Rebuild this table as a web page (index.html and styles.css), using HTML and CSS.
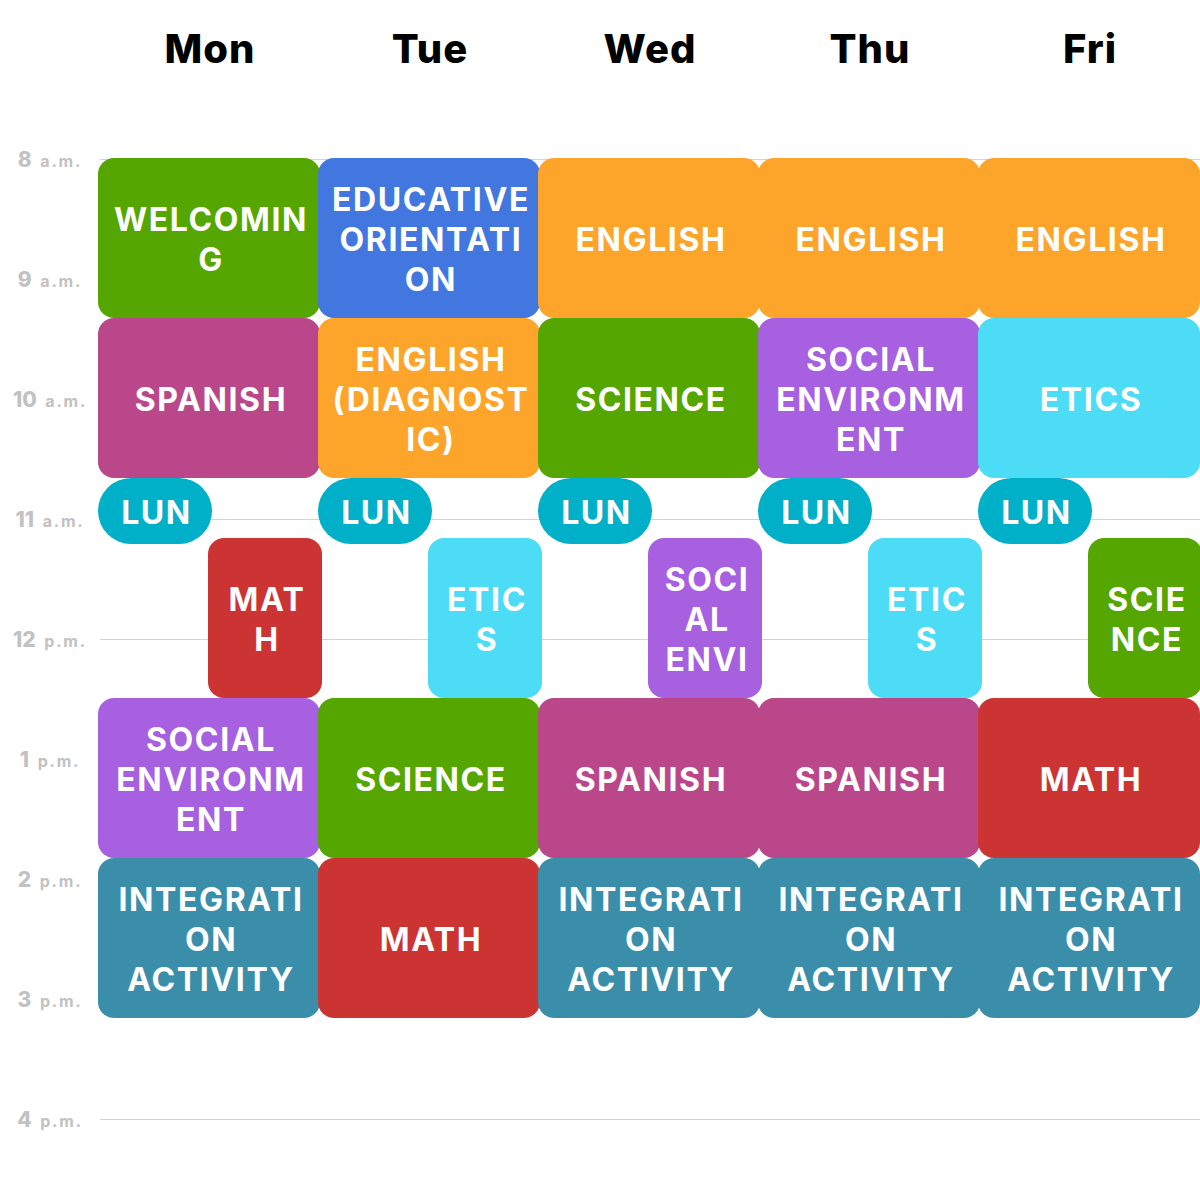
FILE: index.html
```html
<!DOCTYPE html>
<html lang="en">
<head>
<meta charset="utf-8">
<title>Weekly timetable</title>
<link rel="stylesheet" href="styles.css">
</head>
<body>
<div class="page">
  <div class="days">
    <div class="corner"></div>
    <div class="day">Mon</div>
    <div class="day">Tue</div>
    <div class="day">Wed</div>
    <div class="day">Thu</div>
    <div class="day">Fri</div>
  </div>

  <div class="table">
    <div class="hline h8"></div>
    <div class="hline h9"></div>
    <div class="hline h10"></div>
    <div class="hline h11"></div>
    <div class="hline h12"></div>
    <div class="hline h13"></div>
    <div class="hline h14"></div>
    <div class="hline h15"></div>
    <div class="hline h16"></div>

    <div class="time h8"><b>8</b> a.m.</div>
    <div class="time h9"><b>9</b> a.m.</div>
    <div class="time h10"><b>10</b> a.m.</div>
    <div class="time h11"><b>11</b> a.m.</div>
    <div class="time h12"><b>12</b> p.m.</div>
    <div class="time h13"><b>1</b> p.m.</div>
    <div class="time h14"><b>2</b> p.m.</div>
    <div class="time h15"><b>3</b> p.m.</div>
    <div class="time h16"><b>4</b> p.m.</div>

    <!-- Monday -->
    <div class="blk mon p1 green">WELCOMIN<br>G</div>
    <div class="blk mon p2 magenta">SPANISH</div>
    <div class="lunch mon">LUN</div>
    <div class="blk small mon p3 red">MAT<br>H</div>
    <div class="blk mon p4 purple">SOCIAL<br>ENVIRONM<br>ENT</div>
    <div class="blk mon p5 teal">INTEGRATI<br>ON<br>ACTIVITY</div>

    <!-- Tuesday -->
    <div class="blk tue p1 blue">EDUCATIVE<br>ORIENTATI<br>ON</div>
    <div class="blk tue p2 orange">ENGLISH<br>(DIAGNOST<br>IC)</div>
    <div class="lunch tue">LUN</div>
    <div class="blk small tue p3 cyan">ETIC<br>S</div>
    <div class="blk tue p4 green">SCIENCE</div>
    <div class="blk tue p5 red">MATH</div>

    <!-- Wednesday -->
    <div class="blk wed p1 orange">ENGLISH</div>
    <div class="blk wed p2 green">SCIENCE</div>
    <div class="lunch wed">LUN</div>
    <div class="blk small wed p3 purple">SOCI<br>AL<br>ENVI</div>
    <div class="blk wed p4 magenta">SPANISH</div>
    <div class="blk wed p5 teal">INTEGRATI<br>ON<br>ACTIVITY</div>

    <!-- Thursday -->
    <div class="blk thu p1 orange">ENGLISH</div>
    <div class="blk thu p2 purple">SOCIAL<br>ENVIRONM<br>ENT</div>
    <div class="lunch thu">LUN</div>
    <div class="blk small thu p3 cyan">ETIC<br>S</div>
    <div class="blk thu p4 magenta">SPANISH</div>
    <div class="blk thu p5 teal">INTEGRATI<br>ON<br>ACTIVITY</div>

    <!-- Friday -->
    <div class="blk fri p1 orange">ENGLISH</div>
    <div class="blk fri p2 cyan">ETICS</div>
    <div class="lunch fri">LUN</div>
    <div class="blk small fri p3 green">SCIE<br>NCE</div>
    <div class="blk fri p4 red">MATH</div>
    <div class="blk fri p5 teal">INTEGRATI<br>ON<br>ACTIVITY</div>
  </div>
</div>
</body>
</html>
```

FILE: styles.css
```css
html, body {
  margin: 0;
  padding: 0;
  background: #ffffff;
  overflow: hidden;
}

.page {
  width: 1200px;
  height: 1180px;
  overflow: hidden;
  font-family: Inter, "Liberation Sans", sans-serif;
}

/* ---------- day header ---------- */
.days {
  display: grid;
  grid-template-columns: 100px repeat(5, 220px);
  height: 96px;
  align-items: center;
}

.day {
  text-align: center;
  font-size: 40px;
  font-weight: 800;
  color: #000;
  letter-spacing: 1px;
}

/* ---------- timetable grid ---------- */
.table {
  margin-top: 64px;
  display: grid;
  grid-template-columns: 100px repeat(5, 220px);
  grid-template-rows: repeat(49, 20px);
}

.hline {
  grid-column: 2 / -1;
  align-self: start;
  height: 0;
  border-top: 1px solid #d3d3d3;
  margin-top: -1px;
}

.time {
  grid-column: 1;
  align-self: start;
  margin-top: -10px;
  height: 20px;
  line-height: 20px;
  text-align: center;
  color: #c2c2c2;
  font-size: 16px;
  font-weight: 700;
  letter-spacing: 1.8px;
  white-space: nowrap;
}

.time b {
  font-size: 21px;
  font-weight: 800;
  letter-spacing: 0;
  margin-right: 3px;
}

.h8  { grid-row: 1; }
.h9  { grid-row: 7; }
.h10 { grid-row: 13; }
.h11 { grid-row: 19; }
.h12 { grid-row: 25; }
.h13 { grid-row: 31; }
.h14 { grid-row: 37; }
.h15 { grid-row: 43; }
.h16 { grid-row: 49; }

/* columns */
.mon { grid-column: 2; }
.tue { grid-column: 3; }
.wed { grid-column: 4; }
.thu { grid-column: 5; }
.fri { grid-column: 6; }

/* periods */
.p1 { grid-row: 1 / 9; }
.p2 { grid-row: 9 / 17; }
.p3 { grid-row: 20 / 28; }
.p4 { grid-row: 28 / 36; }
.p5 { grid-row: 36 / 44; }

/* ---------- lesson blocks ---------- */
.blk {
  margin: -2px 0 2px -2px;
  padding: 4px 0 0 4px;
  box-sizing: border-box;
  border-radius: 16px;
  display: flex;
  align-items: center;
  justify-content: center;
  text-align: center;
  color: #fff;
  font-size: 32px;
  font-weight: 700;
  line-height: 40px;
  letter-spacing: 1.6px;
  white-space: nowrap;
}

.blk.small {
  justify-self: end;
  width: 114px;
  margin-right: -2px;
}

.lunch {
  grid-row: 17 / 21;
  align-self: start;
  justify-self: start;
  width: 114px;
  height: 66px;
  padding: 3px 0 0 3px;
  box-sizing: border-box;
  margin: -2px 0 0 -2px;
  border-radius: 33px;
  background: #00b0c9;
  color: #fff;
  display: flex;
  align-items: center;
  justify-content: center;
  font-size: 32px;
  font-weight: 700;
  letter-spacing: 1.6px;
}

/* colours */
.green   { background: #55a600; }
.blue    { background: #4177de; }
.orange  { background: #fda52b; }
.magenta { background: #ba4789; }
.purple  { background: #a660e0; }
.cyan    { background: #4cdcf5; }
.red     { background: #cc3333; }
.teal    { background: #3a8ea9; }
```
